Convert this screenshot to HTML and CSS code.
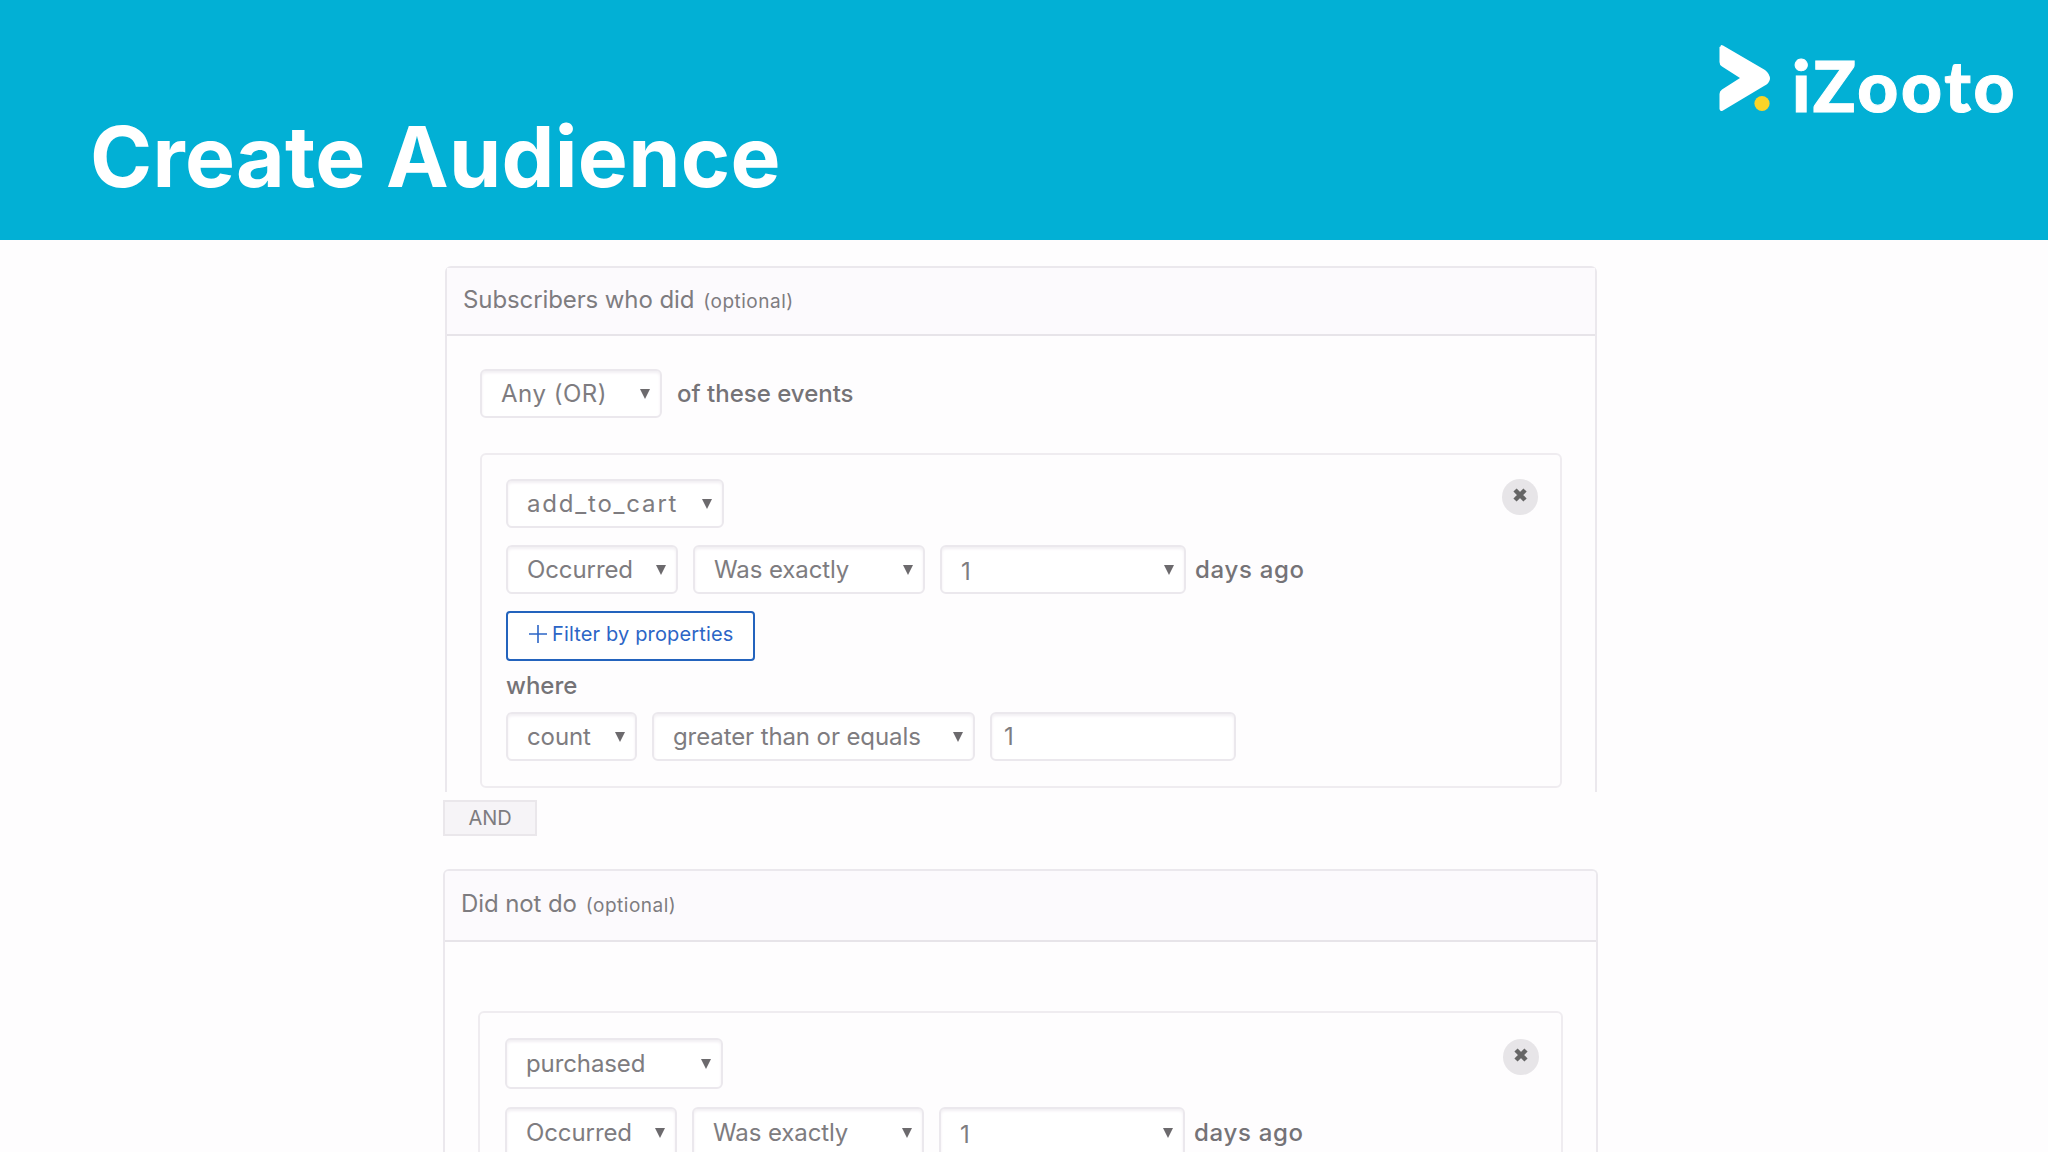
FILE: index.html
```html
<!DOCTYPE html>
<html lang="en">
<head>
    <meta charset="UTF-8">
    <meta name="viewport" content="width=device-width, initial-scale=1.0">
    <title>Create Audience</title>
    <link rel="stylesheet" href="styles.css">
</head>
<body>
    <header class="banner">
        <h1>Create Audience</h1>
        <div class="logo">
            <svg class="logo-mark" width="52" height="68" viewBox="0 0 52 68">
                <path d="M2.500 2.500 Q2.500 0 5 1.500 L47 26 Q52 30 52 35 Q51 40 46 42 L5 66.500 Q2 68 1.500 65 V50 Q1.500 47 4 45.500 L22 34 L4 22.500 Q1.500 21 1.500 18 V3 Z" fill="#fff"/>
                <circle cx="44" cy="59.500" r="10" fill="#02b0d5"/>
                <circle cx="44" cy="59.500" r="7.600" fill="#fad428"/>
            </svg>
            <span class="logo-text">iZooto</span>
        </div>
    </header>

    <main>
        <section class="panel did">
            <div class="panel-title"><span class="name">Subscribers who did</span> <small>(optional)</small></div>
            <div class="panel-body">
                <div class="row">
                    <div class="select w-any"><span>Any (OR)</span></div>
                    <b class="label events">of these events</b>
                </div>
                <div class="event">
                    <button class="close"><svg width="14" height="14" viewBox="0 0 14 14"><path d="M2 2 L12 12 M12 2 L2 12"/></svg></button>
                    <div class="row">
                        <div class="select w-event cart"><span>add_to_cart</span></div>
                    </div>
                    <div class="row">
                        <div class="select w-occurred"><span>Occurred</span></div>
                        <div class="select w-exactly"><span>Was exactly</span></div>
                        <div class="select w-days low"><span>1</span></div>
                        <b class="label days">days ago</b>
                    </div>
                    <button class="filter">
                        <svg width="20" height="20" viewBox="0 0 20 20"><path d="M10 1 V19 M1 10 H19"/></svg>
                        <span>Filter by properties</span>
                    </button>
                    <b class="label where">where</b>
                    <div class="row">
                        <div class="select w-count"><span>count</span></div>
                        <div class="select w-greater"><span>greater than or equals</span></div>
                        <div class="input">1</div>
                    </div>
                </div>
            </div>
        </section>

        <div class="and">AND</div>

        <section class="panel did-not">
            <div class="panel-title"><span class="name">Did not do</span> <small>(optional)</small></div>
            <div class="panel-body">
                <div class="event">
                    <button class="close"><svg width="14" height="14" viewBox="0 0 14 14"><path d="M2 2 L12 12 M12 2 L2 12"/></svg></button>
                    <div class="row">
                        <div class="select w-event"><span>purchased</span></div>
                    </div>
                    <div class="row">
                        <div class="select w-occurred"><span>Occurred</span></div>
                        <div class="select w-exactly"><span>Was exactly</span></div>
                        <div class="select w-days low"><span>1</span></div>
                        <b class="label days">days ago</b>
                    </div>
                </div>
            </div>
        </section>
    </main>
</body>
</html>
```
FILE: styles.css
```css
* {
    box-sizing: border-box;
}
body {
    margin: 0;
    height: 1152px;
    overflow: hidden;
    background: #fefdfe;
    color: #7e7c80;
    font-family: Inter, "Open Sans", sans-serif;
    font-size: 24px;
    font-weight: 400;
    letter-spacing: -0.1px;
    white-space: nowrap;
}
.banner {
    display: flex;
    justify-content: space-between;
    align-items: flex-start;
    height: 240px;
    padding: 44px 32px 0 90px;
    background: #02b0d5;
    color: #fff;
}
h1 {
    margin: 63px 0 0;
    font-family: Inter, sans-serif;
    font-size: 84px;
    font-weight: 700;
    line-height: 100px;
    letter-spacing: 0.3px;
}
.logo {
    display: flex;
    width: 298px;
}
.logo-mark {
    flex: none;
}
.logo-text {
    margin: 3px 0 0 22px;
    font-family: Lato, sans-serif;
    font-size: 71px;
    font-weight: 900;
    line-height: 76px;
    letter-spacing: 2.8px;
    -webkit-text-stroke: 1px #fff;
}

/* panels */
.panel {
    border: 2px solid #ebe8ed;
    border-radius: 6px;
}
.did {
    width: 1152px;
    height: 526px;
    margin: 26px 0 0 445px;
    border-bottom: 0;
    border-radius: 6px 6px 0 0;
}
.did-not {
    width: 1155px;
    height: 283px;
    margin: 33px 0 0 443px;
    border-bottom: 0;
    border-radius: 6px 6px 0 0;
    overflow: hidden;
}
.panel-title {
    display: flex;
    align-items: baseline;
    height: 68px;
    padding: 16px 16px 0;
    border-bottom: 2px solid #e7e4e9;
    background: #fcfafd;
    line-height: 32px;
}
.panel-title small {
    margin-left: 9px;
    font-size: 19px;
    letter-spacing: 0.5px;
}
.panel-body {
    padding: 33px 33px 0;
}
.event {
    position: relative;
    display: flex;
    flex-direction: column;
    height: 335px;
    margin-top: 35px;
    padding: 24px 24px 0;
    border: 2px solid #efecf0;
    border-radius: 6px;
}
.row {
    display: flex;
    align-items: center;
    gap: 15px;
}
.event .row + .row {
    margin-top: 17px;
}
.did-not .panel-title {
    height: 71px;
    padding-top: 17px;
}
.did-not .panel-body {
    padding-top: 34px;
}
.did-not .event {
    padding: 25px 24px 0 25px;
}
.did-not .row + .row {
    margin-top: 18px;
}
.did-not .select {
    height: 51px;
}
.did-not .close {
    top: 26px;
}

/* form controls */
.select, .input {
    flex: none;
    height: 49px;
    border: 2px solid #ebe8ed;
    border-radius: 6px;
    background: #fff;
    box-shadow: inset 0 2px 3px #f2eff3;
    line-height: 45px;
}
.select {
    display: flex;
    align-items: center;
    justify-content: space-between;
    padding: 0 10px 0 19px;
}
.select::after {
    content: "";
    border: 5px solid transparent;
    border-top: 10px solid #6c6a6d;
    border-bottom: 0;
}
.low span {
    padding-top: 4px;
}
.input {
    width: 246px;
    padding-left: 12px;
}
.w-any {
    width: 182px;
    letter-spacing: 0.5px;
}
.w-event { width: 218px; }
.w-occurred { width: 172px; }
.w-exactly { width: 232px; }
.w-days { width: 246px; }
.w-count { width: 131px; }
.w-greater { width: 323px; }
.cart {
    letter-spacing: 1.8px;
}
.label {
    color: #757377;
    font-weight: 500;
    letter-spacing: 0;
}
.days {
    margin-left: -6px;
    letter-spacing: 0.7px;
}
.where {
    height: 51px;
    line-height: 49px;
}
.filter {
    display: flex;
    align-items: center;
    width: 249px;
    height: 50px;
    margin-top: 17px;
    padding: 0 0 4px 20px;
    border: 2px solid #2363bd;
    border-radius: 4px;
    background: #fff;
    color: #2c65c6;
    font: 400 20px Inter, sans-serif;
    letter-spacing: 0.15px;
}
.filter svg {
    margin-right: 4px;
    stroke: #2c65c6;
    stroke-width: 1.6;
}
.close {
    position: absolute;
    top: 24px;
    right: 22px;
    width: 36px;
    height: 36px;
    padding: 0 0 4px;
    border: 0;
    border-radius: 50%;
    background: #e7e5e8;
    line-height: 0;
}
.close path {
    stroke: #666;
    stroke-width: 4.5;
}
.and {
    width: 94px;
    height: 36px;
    margin: 8px 0 0 443px;
    border: 2px solid #eae7eb;
    background: #f6f4f7;
    font-size: 20px;
    line-height: 32px;
    text-align: center;
}
```
